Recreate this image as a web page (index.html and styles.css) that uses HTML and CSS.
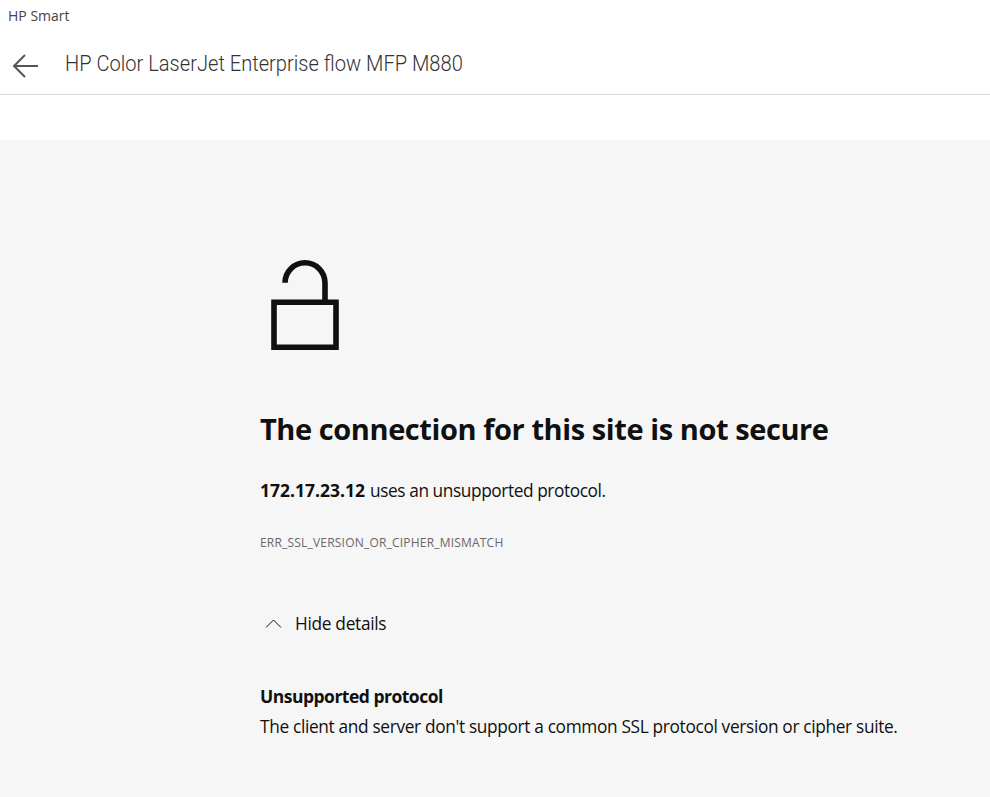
FILE: index.html
```html
<!DOCTYPE html>
<html lang="en">
<head>
<meta charset="utf-8">
<title>HP Smart</title>
<link rel="stylesheet" href="styles.css">
</head>
<body>
<div class="titlebar">HP Smart</div>
<header class="header">
<svg class="back" width="26" height="24" viewBox="0 0 26 24"><path d="M26 12H1.5M13 1L2 12L13 23"/></svg>
<h1 class="device">HP Color LaserJet Enterprise flow MFP M880</h1>
</header>
<main class="page">
<svg class="lock" width="90" height="90" viewBox="0 0 90 90"><path d="M14 42.300H76V87.200H14ZM25 22.800A20 20 0 0 1 65 22.800V42"/></svg>
<h2 class="heading">The connection for this site is not secure</h2>
<p class="message"><b>172.17.23.12</b><span>uses an unsupported protocol.</span></p>
<p class="code">ERR_SSL_VERSION_OR_CIPHER_MISMATCH</p>
<div class="toggle"><svg width="17" height="9" viewBox="0 0 17 9"><path d="M1 8.500L8.500 1L16 8.500"/></svg><span>Hide details</span></div>
<h3 class="subhead">Unsupported protocol</h3>
<p class="detail">The client and server don't support a common SSL protocol version or cipher suite.</p>
</main>
</body>
</html>
```
FILE: styles.css
```css
* { box-sizing: border-box; }
body { margin: 0; background: #fff; color: #101010; font-family: "Open Sans", "Noto Sans", sans-serif; }
h1, h2, h3, p { margin: 0; white-space: nowrap; }
.titlebar { height: 32px; padding-left: 8px; font-size: 14px; line-height: 32px; color: #444; }
.header { height: 63px; border-bottom: 1px solid #d9d9d9; display: flex; align-items: center; padding-left: 12px; gap: 26px; }
.page { margin-top: 45px; height: 657px; background: #f6f6f6; padding: 120px 0 0 260px; }
svg { fill: none; stroke: #101010; display: block; }
.back { stroke: #555; stroke-width: 2; margin-top: 5px; }
.lock { stroke-width: 5.6; }
.device { font-family: Roboto, sans-serif; font-size: 22.5px; font-weight: 300; color: #333; transform: scaleX(0.893); transform-origin: left center; margin-left: 1px; }
.heading { margin-top: 56px; font-size: 29px; line-height: 46px; font-weight: 700; letter-spacing: -0.42px; }
.message { height: 26px; margin-top: 25px; font-size: 17.5px; line-height: 26px; display: flex; align-items: baseline; gap: 5px; }
.message span { font-size: 17.3px; letter-spacing: -0.42px; }
.code { margin-top: 31px; font-size: 12px; line-height: 18px; color: #686868; letter-spacing: 0.2px; }
.toggle { margin-top: 57px; height: 28px; display: flex; align-items: center; padding-left: 5px; gap: 13px; font-size: 17.3px; letter-spacing: -0.3px; }
.subhead { margin-top: 44px; font-size: 17.5px; line-height: 30px; font-weight: 700; letter-spacing: -0.5px; }
.detail { margin-top: 1px; font-size: 17.3px; line-height: 30px; letter-spacing: -0.34px; }
```
